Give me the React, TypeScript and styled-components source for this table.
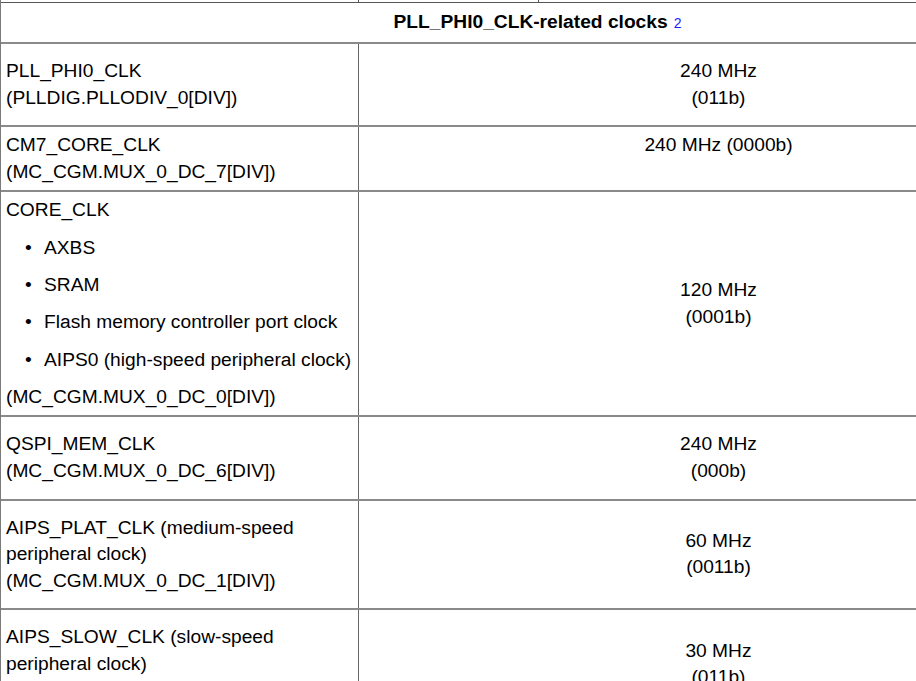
import React from "react";
import styled, { createGlobalStyle } from "styled-components";

const GlobalStyle = createGlobalStyle`
  html, body {
    margin: 0;
    padding: 0;
    background: #ffffff;
    overflow: hidden;
  }
  body {
    font-family: "Liberation Sans", Arial, sans-serif;
    color: #000000;
  }
`;

const Table = styled.div`
  width: 1077px;
  border-left: 1px solid #7a7a7a;
  border-right: 1px solid #7a7a7a;
  font-size: 19.2px;
  line-height: 26.6px;
`;

const StubRow = styled.div`
  display: flex;
  height: 2px;
  border-bottom: 1.5px solid #555555;
`;

const StubCell = styled.div<{ $w?: number }>`
  box-sizing: border-box;
  width: ${(p) => (p.$w ? `${p.$w}px` : "auto")};
  flex: ${(p) => (p.$w ? "none" : "1")};
  border-right: 1px solid #555555;
  &:last-child {
    border-right: none;
  }
`;

const HeaderRow = styled.div`
  display: flex;
  align-items: center;
  justify-content: center;
  height: 39px;
  border-bottom: 2px solid #8a8a8a;
  font-weight: bold;
  padding-right: 4px;
`;

const Sup = styled.sup`
  color: #1a1aff;
  font-weight: normal;
  font-size: 14px;
  line-height: 0;
  vertical-align: 9px;
  margin-left: 6px;
`;

const Row = styled.div`
  display: flex;
  border-bottom: 2px solid #8a8a8a;
`;

const NameCell = styled.div<{ $spacious?: boolean }>`
  box-sizing: border-box;
  width: 358px;
  flex: none;
  border-right: 1px solid #666666;
  white-space: nowrap;
  padding: ${(p) => (p.$spacious ? "14px 2px 14px 5px" : "5px 2px 5px 5px")};
`;

const ValueCell = styled.div<{ $spacious?: boolean; $top?: boolean }>`
  flex: 1;
  display: flex;
  flex-direction: column;
  justify-content: ${(p) => (p.$top ? "flex-start" : "center")};
  align-items: center;
  text-align: center;
  padding: ${(p) => (p.$spacious ? "14px 8px" : "5px 8px")};
`;

const BulletList = styled.ul`
  list-style: none;
  margin: 0;
  padding: 0;
`;

const Item = styled.li`
  display: flex;
  margin-top: 10.7px;
  &:last-child {
    margin-bottom: 10.7px;
  }
`;

const Bullet = styled.span`
  box-sizing: border-box;
  width: 38px;
  flex: none;
  padding-left: 19px;
`;

interface IClock {
  name: string[];
  value: string[];
  spacious?: boolean;
  top?: boolean;
  items?: string[];
  tail?: string;
}

const clocks: IClock[] = [
  {
    name: ["PLL_PHI0_CLK", "(PLLDIG.PLLODIV_0[DIV])"],
    value: ["240 MHz", "(011b)"],
    spacious: true,
  },
  {
    name: ["CM7_CORE_CLK", "(MC_CGM.MUX_0_DC_7[DIV])"],
    value: ["240 MHz (0000b)"],
    top: true,
  },
  {
    name: ["CORE_CLK"],
    items: [
      "AXBS",
      "SRAM",
      "Flash memory controller port clock",
      "AIPS0 (high-speed peripheral clock)",
    ],
    tail: "(MC_CGM.MUX_0_DC_0[DIV])",
    value: ["120 MHz", "(0001b)"],
  },
  {
    name: ["QSPI_MEM_CLK", "(MC_CGM.MUX_0_DC_6[DIV])"],
    value: ["240 MHz", "(000b)"],
    spacious: true,
  },
  {
    name: ["AIPS_PLAT_CLK (medium-speed", "peripheral clock)", "(MC_CGM.MUX_0_DC_1[DIV])"],
    value: ["60 MHz", "(0011b)"],
    spacious: true,
  },
  {
    name: ["AIPS_SLOW_CLK (slow-speed", "peripheral clock)", "(MC_CGM.MUX_0_DC_2[DIV])"],
    value: ["30 MHz", "(011b)"],
    spacious: true,
  },
];

const App: React.FC = () => {
  return (
    <>
      <GlobalStyle />
      <Table>
        <StubRow>
          <StubCell $w={358} />
          <StubCell $w={180} />
          <StubCell />
        </StubRow>
        <HeaderRow>
          PLL_PHI0_CLK-related clocks<Sup>2</Sup>
        </HeaderRow>
        {clocks.map((clock) => (
          <Row key={clock.name[0]}>
            <NameCell $spacious={clock.spacious}>
              {clock.name.map((line) => (
                <div key={line}>{line}</div>
              ))}
              {clock.items && (
                <BulletList>
                  {clock.items.map((item) => (
                    <Item key={item}>
                      <Bullet>•</Bullet>
                      <span>{item}</span>
                    </Item>
                  ))}
                </BulletList>
              )}
              {clock.tail && <div>{clock.tail}</div>}
            </NameCell>
            <ValueCell $spacious={clock.spacious} $top={clock.top}>
              {clock.value.map((line) => (
                <div key={line}>{line}</div>
              ))}
            </ValueCell>
          </Row>
        ))}
      </Table>
    </>
  );
};

export default App;
